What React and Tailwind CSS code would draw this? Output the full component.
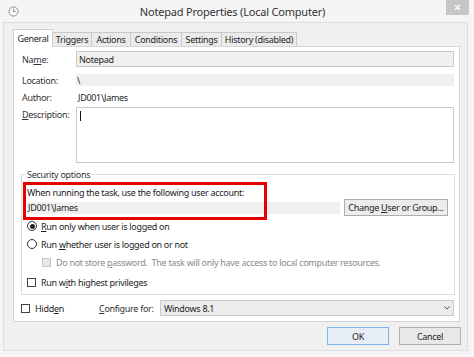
import React from "react";

const U = ({ children }) => <span className="underline underline-offset-[1px]">{children}</span>;

function Radio({ checked }) {
  return (
    <span className="w-[10px] h-[10px] rounded-full border border-[#333] bg-white flex items-center justify-center shrink-0">
      {checked && <span className="w-[5px] h-[5px] rounded-full bg-[#222]" />}
    </span>
  );
}

function Check({ disabled }) {
  return (
    <span
      className={
        disabled
          ? "w-[9px] h-[9px] border border-[#c4c4c4] bg-[#e8e8e8] shrink-0"
          : "w-[9px] h-[9px] border border-[#444] bg-white shrink-0"
      }
    />
  );
}

export default function App() {
  const tabs = [
    ["Triggers", "w-[39px]"],
    ["Actions", "w-[39px]"],
    ["Conditions", "w-[51px]"],
    ["Settings", "w-[40px]"],
    ["History (disabled)", "w-[75px]"],
  ];
  return (
    <div
      className="w-[474px] h-[357px] bg-[#f5f5f5] text-[#1e1e1e] text-[9px] tracking-[-0.3px] leading-none overflow-hidden whitespace-nowrap"
      style={{ fontFamily: '"Noto Sans", "Open Sans", sans-serif' }}
    >
      {/* Title bar */}
      <div className="h-[22px] flex items-start relative">
        <div className="pl-[8px] pt-[6px]">
          <svg width="11" height="11" viewBox="0 0 12 12">
            <circle cx="6" cy="6" r="5" fill="none" stroke="#8a8a8a" strokeWidth="1" />
            <path d="M6 3 V6 H8.5" fill="none" stroke="#8a8a8a" strokeWidth="1" />
          </svg>
        </div>
        <div className="flex-1 text-center pt-[6px] text-[11px] tracking-[-0.2px] text-[#333]">Notepad Properties (Local Computer)</div>
        <div className="w-[23px] h-[15px] bg-[#c6c6c6] mr-[5px] flex items-center justify-center">
          <svg width="7" height="7" viewBox="0 0 7 7">
            <path d="M1 1 L6 6 M6 1 L1 6" stroke="#fff" strokeWidth="1.3" />
          </svg>
        </div>
      </div>

      {/* Client area */}
      <div className="ml-[3px] w-[465px] h-[329px] bg-[#f0f0f0] border border-[#dddddd] flex flex-col">
        {/* tabs */}
        <div className="pl-[9px] flex items-end h-[23px]">
          <div className="h-[18px] w-[40px] bg-white border border-[#d0d0d0] border-b-0 flex items-center justify-center relative z-10 -mb-px">
            General
          </div>
          {tabs.map(([t, w]) => (
            <div
              key={t}
              className={`h-[14px] ${w} bg-[#ebebeb] border border-[#c8c8c8] border-b-0 border-l-0 flex items-center justify-center`}
            >
              {t}
            </div>
          ))}
        </div>
        {/* panel */}
        <div className="ml-[9px] w-[447px] h-[276px] bg-white border border-[#d6d6d6] flex flex-col pl-[8px] pr-[5px] pt-[4px] relative">
          {/* Name */}
          <div className="flex items-center h-[16px]">
            <div className="w-[54px] text-[#333]">Na<U>m</U>e:</div>
            <div className="flex-1 h-[16px] bg-[#f0f0f0] border border-[#c9c9c9] flex items-center pl-[2px]">Notepad</div>
          </div>
          <div className="flex items-center h-[12px] mt-[7px]">
            <div className="w-[54px] text-[#333]">Location:</div>
            <div className="flex-1 h-[12px] bg-[#f0f0f0] flex items-center pl-[1px]">\</div>
          </div>
          <div className="flex items-center h-[12px] mt-[5px]">
            <div className="w-[54px] text-[#333]">Author:</div>
            <div className="flex-1 pl-[2px]">JD001\James</div>
          </div>
          <div className="flex items-start mt-[4px]">
            <div className="w-[54px] text-[#333] pt-[3px]"><U>D</U>escription:</div>
            <div className="flex-1 h-[56px] bg-white border border-[#c9c9c9] pl-[3px] pt-[3px]">
              <div className="w-px h-[10px] bg-[#111]" />
            </div>
          </div>

          {/* Security options group */}
          <div className="mt-[11px] -ml-[1px] w-[434px] h-[121px] border border-[#dcdcdc] relative flex flex-col pl-[5px]">
            <div className="absolute -top-[5px] left-[4px] bg-white px-[1px] text-[#333]">Security options</div>
            <div className="mt-[13px] text-[#222]">When running the task, use the following user account:</div>
            <div className="flex items-center mt-[2px]">
              <div className="w-[313px] h-[12px] bg-[#f0f0f0] flex items-center pl-[1px]">JD001\James</div>
              <div className="ml-[4px] w-[104px] h-[17px] bg-[#ececec] border border-[#adadad] flex items-center justify-center text-[#222]">
                <span>Change <U>U</U>ser or Group...</span>
              </div>
            </div>
            <div className="flex items-center mt-[4px] h-[12px] gap-[4px]">
              <Radio checked />
              <span><U>R</U>un only when user is logged on</span>
            </div>
            <div className="flex items-center mt-[6px] h-[12px] gap-[4px]">
              <Radio />
              <span>Run <U>w</U>hether user is logged on or not</span>
            </div>
            <div className="flex items-center mt-[6px] h-[12px] pl-[15px] gap-[5px] text-[#8a8a8a]">
              <Check disabled />
              <span>Do not store <U>p</U>assword.&nbsp; The task will only have access to local computer resources.</span>
            </div>
            <div className="flex items-center mt-[8px] h-[12px] gap-[5px]">
              <Check />
              <span>Run w<U>i</U>th highest privileges</span>
            </div>
            {/* red annotation */}
            <div className="absolute left-[1px] top-[7px] w-[244px] h-[38px] border-[3px] border-[#e60000]" />
          </div>

          {/* Bottom row */}
          <div className="flex items-center mt-[5px] h-[16px] -ml-[1px]">
            <Check />
            <span className="ml-[5px] w-[64px]">Hidd<U>e</U>n</span>
            <span className="w-[61px] text-[#333]"><U>C</U>onfigure for:</span>
            <div className="flex-1 h-[16px] bg-[#ececec] border border-[#c9c9c9] flex items-center pl-[3px] justify-between pr-[3px]">
              <span>Windows 8.1</span>
              <svg width="6" height="4" viewBox="0 0 6 4">
                <path d="M0.5 0.5 L3 3 L5.5 0.5" fill="none" stroke="#555" strokeWidth="1" />
              </svg>
            </div>
          </div>
        </div>
        {/* buttons */}
        <div className="flex justify-end gap-[10px] pr-[6px] mt-[5px]">
          <div className="w-[62px] h-[18px] bg-[#e8eef5] border border-[#7eb4ea] flex items-center justify-center">OK</div>
          <div className="w-[62px] h-[18px] bg-[#e8e8e8] border border-[#adadad] flex items-center justify-center">Cancel</div>
        </div>
      </div>
    </div>
  );
}
